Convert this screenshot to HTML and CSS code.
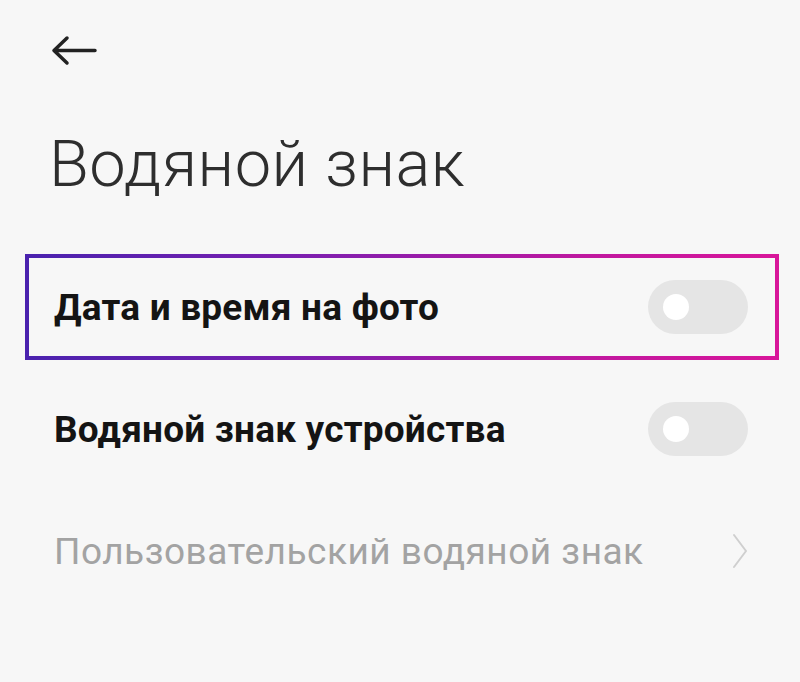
FILE: index.html
```html
<!DOCTYPE html>
<html lang="ru">
<head>
<meta charset="utf-8">
<link rel="stylesheet" href="styles.css">
</head>
<body>
<div class="screen">
  <div class="topbar">
    <svg class="back" width="48" height="32" viewBox="0 0 48 32">
      <path d="M45 15.5H4M17 3L4 15.5L17 28" fill="none" stroke="#222" stroke-width="3.5" stroke-linecap="round" stroke-linejoin="round"/>
    </svg>
  </div>
  <h1 class="title">Водяной знак</h1>
  <div class="list">
    <div class="row row-highlight">
      <span class="label">Дата и время на фото</span>
      <span class="toggle"><span class="knob"></span></span>
    </div>
    <div class="row">
      <span class="label">Водяной знак устройства</span>
      <span class="toggle"><span class="knob"></span></span>
    </div>
    <div class="row">
      <span class="label label-disabled">Пользовательский водяной знак</span>
      <svg class="chevron" width="16" height="36" viewBox="0 0 16 36">
        <path d="M2 2L14 18L2 34" fill="none" stroke="#cfcfcf" stroke-width="2" stroke-linecap="round" stroke-linejoin="round"/>
      </svg>
    </div>
  </div>
</div>
</body>
</html>
```
FILE: styles.css
```css
html, body {
  margin: 0;
  padding: 0;
  background: #f7f7f7;
}
body {
  font-family: Roboto, "Noto Sans", sans-serif;
}
.screen {
  width: 800px;
  height: 682px;
  overflow: hidden;
}
.topbar {
  display: flex;
  align-items: center;
  height: 32px;
  padding: 35px 0 0 50px;
}
.back {
  display: block;
}
.title {
  margin: 65px 0 0 0;
  padding-left: 49px;
  font-size: 65px;
  line-height: 65px;
  font-weight: 300;
  color: #2e2e2e;
  letter-spacing: 0.5px;
}
.list {
  margin: 57px 0 0 25px;
  width: 754px;
  display: flex;
  flex-direction: column;
  gap: 16px;
}
.row {
  box-sizing: border-box;
  height: 106px;
  border: 4px solid transparent;
  padding: 0 27px 0 25px;
  display: flex;
  align-items: center;
  justify-content: space-between;
}
.row-highlight {
  border-image: linear-gradient(90deg, #4a22ae 0%, #7a1fb0 35%, #c0189f 75%, #d8169a 100%) 1;
}
.label {
  font-size: 37px;
  font-weight: 700;
  color: #141414;
  letter-spacing: 0.2px;
}
.label-disabled {
  font-weight: 400;
  color: #a3a3a3;
  letter-spacing: 0.5px;
}
.toggle {
  box-sizing: border-box;
  width: 100px;
  height: 54px;
  border-radius: 27px;
  background: #e5e5e5;
  display: flex;
  align-items: center;
  padding-left: 15px;
}
.knob {
  width: 26px;
  height: 26px;
  border-radius: 50%;
  background: #ffffff;
}
.chevron {
  display: block;
}
```
